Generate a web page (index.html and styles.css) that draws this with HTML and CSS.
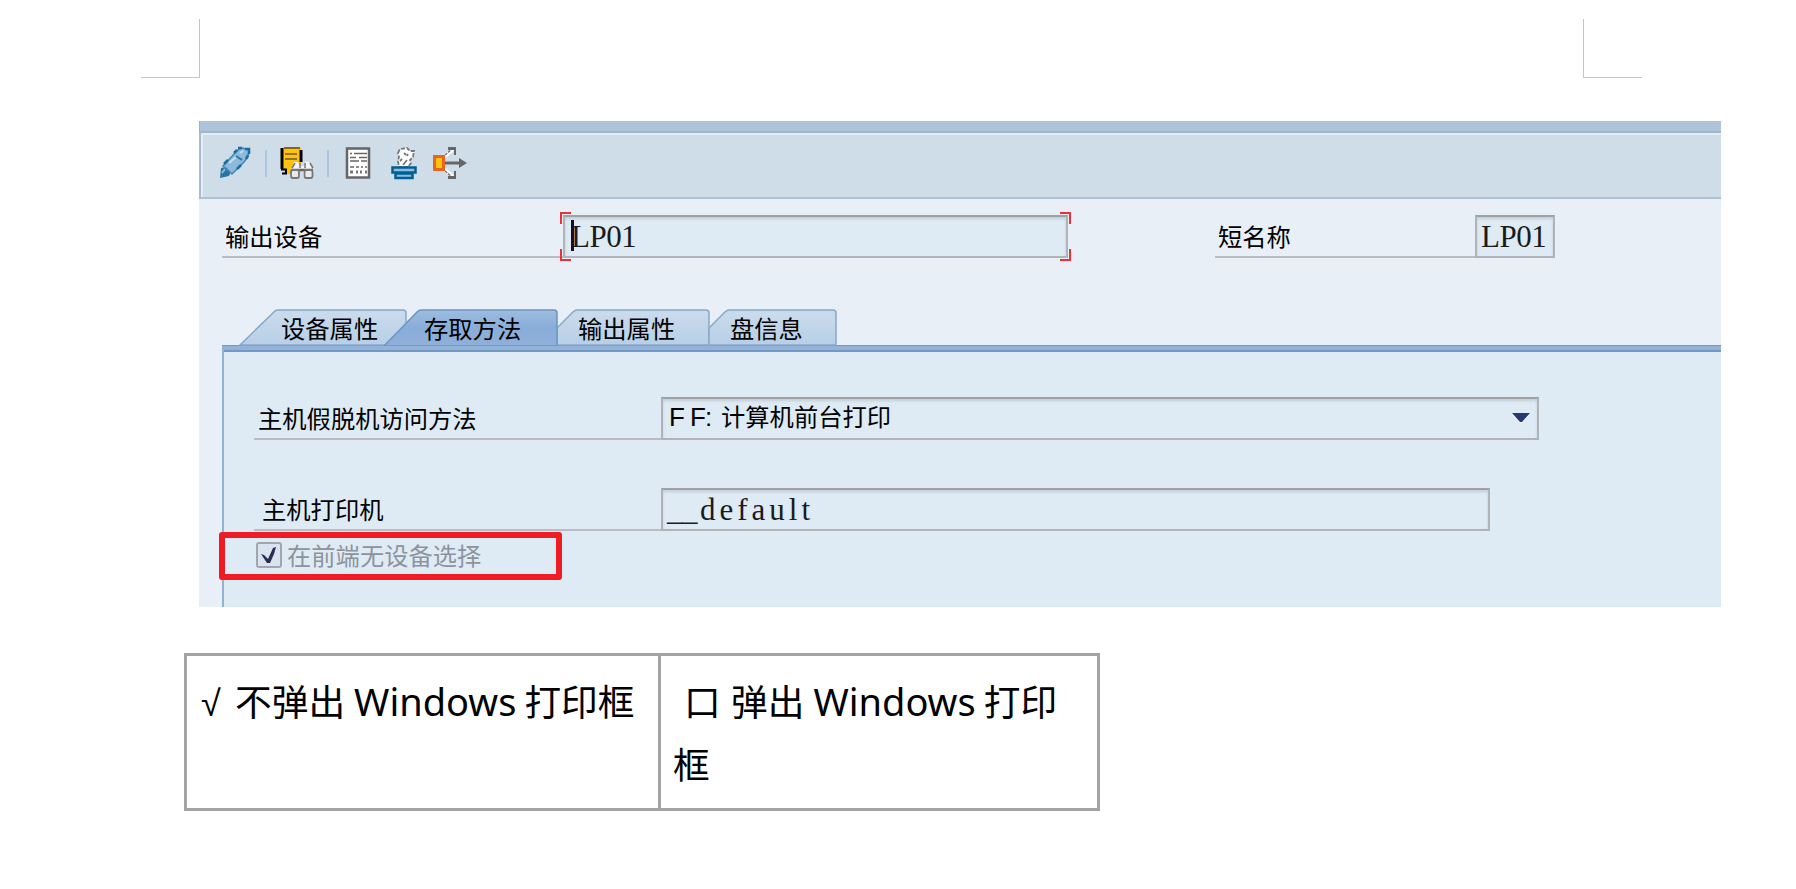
FILE: index.html
```
<!DOCTYPE html>
<html lang="zh-CN">
<head>
    <meta charset="utf-8">
    <title>输出设备</title>
    <link rel="stylesheet" href="styles.css">
</head>
<body>
    <div class="crop-marks">
        <div class="mark mark-left"></div>
        <div class="mark mark-right"></div>
    </div>

    <div class="window">
        <div class="title-strip"></div>
        <div class="toolbar">
            <svg class="icon" width="34" height="36" viewBox="0 0 34 36">
                <path d="M3 33l1-10 4-1 6 5-2 4z" fill="#2876a5"/>
                <path d="M6 21L17 9l5-5 4-1 6 2-1 7-4 5-12 12-5-5z" fill="#8db9dc" stroke="#4088b4" stroke-width="1.500"/>
                <path d="M21 3h4M28 4h4v5M7 19l4-4M17 8l3-3M20 24l4-4M29 14l2-4" fill="none" stroke="#1c6c9c" stroke-width="2.500"/>
                <path d="M19 11l6 4" stroke="#2876a5" stroke-width="2"/>
                <path d="M12 18l7-6M23 8l3-2" stroke="#c6e0f2" stroke-width="2"/>
                <path d="M5 28l3-4" stroke="#8db9dc" stroke-width="2"/>
            </svg>
            <span class="sep sep-first"></span>
            <svg class="icon icon-note" width="36" height="36" viewBox="0 0 36 36">
                <path d="M2 3h19v15l-9 6-2 5H5l2-5H2z" fill="#ffc20e"/>
                <path d="M2 3v21M21 5v12" fill="none" stroke="#000" stroke-width="3"/>
                <path d="M1 24.500h5v4H2" fill="none" stroke="#000" stroke-width="2"/>
                <path d="M4 3h16" stroke="#8a6410" stroke-width="2"/>
                <path d="M5 9h12M5 14h12" stroke="#93722c" stroke-width="2"/>
                <path d="M11 24l3-7h4l2 4h4l1-4h4l3 7v8h-9v-6h-3v6h-9z" fill="#f4f6f8"/>
                <path d="M12 23l3-5M20 18v5M25 18v5M30 18l3 5" stroke="#777" stroke-width="1.500"/>
                <path d="M11 25h22" stroke="#666" stroke-width="2.500"/>
                <rect x="11" y="25" width="8" height="8" rx="2" fill="#e8ebee" stroke="#777" stroke-width="1.800"/>
                <rect x="24.500" y="25" width="8" height="8" rx="2" fill="#e8ebee" stroke="#777" stroke-width="1.800"/>
            </svg>
            <span class="sep sep-second"></span>
            <svg class="icon icon-doc" width="26" height="36" viewBox="0 0 26 36">
                <rect x="2" y="3.500" width="22" height="29" fill="#fff" stroke="#666" stroke-width="2.500"/>
                <path d="M5 8.500h2M9 8.500h13M5 12.500h6M14 12.500h8M5 16h9M16 16h6M5 22h4M11 22h3M16 22h2M20 22h2" stroke="#666" stroke-width="1.600"/>
                <path d="M5 27h3M11 27h2M15 27h2M20 27h2" stroke="#777" stroke-width="3"/>
            </svg>
            <svg class="icon icon-tray" width="26" height="36" viewBox="0 0 26 36">
                <path d="M7 8l2-4 7-1 3 3h4l-1 6-3 3 1 3-3 4H8l-1-6 1-4z" fill="#fff" stroke="#777" stroke-width="1.800" stroke-dasharray="4 1.500"/>
                <path d="M13 8l2 2M17 9l-1 2M11 14l-2 2M12 20l4-5" stroke="#777" stroke-width="1.800"/>
                <path d="M1.500 22.500h23v5h-23z" fill="#8fbbe0" stroke="#006093" stroke-width="2.500"/>
                <path d="M4.500 28.500h17v4.500h-17z" fill="#8fbbe0" stroke="#006093" stroke-width="2.500"/>
            </svg>
            <svg class="icon icon-split" width="34" height="36" viewBox="0 0 34 36">
                <path d="M11 12l9-8M11 24l9 8" stroke="#fff" stroke-width="4"/>
                <path d="M12 10l8-7M12 26l8 7" stroke="#777" stroke-width="1.500" stroke-dasharray="3 1"/>
                <path d="M15 2h8v8h-2V5h-6zM15 34h8v-8h-2v5h-6z" fill="#666"/>
                <path d="M12 18h16" stroke="#666" stroke-width="3"/>
                <path d="M26 13l8 5-8 5z" fill="#666"/>
                <rect x="1.500" y="11.500" width="9" height="13" fill="#ffc20e" stroke="#e76423" stroke-width="3"/>
            </svg>
        </div>

        <div class="header-row">
            <div class="label label-device">输出设备</div>
            <div class="field field-device">
                <span class="mono">LP01</span>
                <i class="caret"></i>
                <i class="corner tl"></i><i class="corner tr"></i><i class="corner bl"></i><i class="corner br"></i>
            </div>
            <div class="label label-short">短名称</div>
            <div class="field field-short"><span class="mono">LP01</span></div>
        </div>

        <div class="tabs">
            <svg class="tab-shapes" width="620" height="37" viewBox="0 0 620 37">
                <defs>
                    <linearGradient id="tab" x1="0" y1="0" x2="0" y2="1">
                        <stop offset="0" stop-color="#cbdcec"/>
                        <stop offset="1" stop-color="#b8cfe7"/>
                    </linearGradient>
                    <linearGradient id="tabActive" x1="0" y1="0" x2="0" y2="1">
                        <stop offset="0" stop-color="#9dbde0"/>
                        <stop offset=".5" stop-color="#89add9"/>
                        <stop offset="1" stop-color="#8fb0da"/>
                    </linearGradient>
                </defs>
                <g fill="url(#tab)" stroke="#86a9ca" stroke-width="1.500">
                    <path d="M19 36L54 2q1-1 3-1h125q3 0 3 3v32z"/>
                    <path d="M336 36V19L352 3q2-2 4-2h129q3 0 3 3v32z"/>
                    <path d="M488 36V19L504 3q2-2 4-2h104q3 0 3 3v32z"/>
                </g>
                <path d="M163 37L196 3q2-2 4-2h133q3 0 3 3v33z" fill="url(#tabActive)" stroke="#6b95c0" stroke-width="1.500"/>
            </svg>
            <div class="tab tab-attrs">设备属性</div>
            <div class="tab tab-access">存取方法</div>
            <div class="tab tab-output">输出属性</div>
            <div class="tab tab-tray">盘信息</div>
        </div>

        <div class="panel">
            <div class="row">
                <div class="label label-method">主机假脱机访问方法</div>
                <div class="field field-method">
                    <span class="latin">F F:</span><span class="cjk">计算机前台打印</span>
                    <svg class="arrow" width="20" height="12" viewBox="0 0 20 12"><path d="M1 1h18v2l-8 8H9L1 3z" fill="#f3f8fc"/><path d="M1 1h18l-8 9H9z" fill="#233b70"/></svg>
                </div>
            </div>
            <div class="row row-printer">
                <div class="label label-printer">主机打印机</div>
                <div class="field field-printer"><span class="mono">__</span><span class="mono mono-wide">default</span></div>
            </div>
            <div class="check-row">
                <span class="checkbox">
                    <svg width="20" height="22" viewBox="0 0 20 22"><path d="M2 10l3 1 4 4 5-11 3-1-2 7-4 9H8z" fill="#2b2d50"/></svg>
                </span>
                <span class="check-label">在前端无设备选择</span>
            </div>
        </div>
    </div>

    <table class="notes">
        <tr>
            <td class="note-yes"><span class="tick">√</span>不弹出<span class="win">Windows</span>打印框</td>
            <td class="note-no"><span class="box">口</span>弹出<span class="win">Windows</span>打印<br>框</td>
        </tr>
    </table>
</body>
</html>
```
FILE: styles.css
```
* {
    box-sizing: border-box;
}
body {
    margin: 0;
    padding-top: 19px;
    height: 889px;
    overflow: hidden;
    background-color: #fff;
    color: #000;
    font-family: "Noto Sans CJK SC", sans-serif;
}
svg {
    display: block;
}

.crop-marks {
    display: flex;
    justify-content: space-between;
    width: 1501px;
    height: 102px;
    margin-left: 141px;
}
.mark {
    width: 59px;
    height: 59px;
    border-bottom: 1px solid #c6c6c6;
}
.mark-left {
    border-right: 1px solid #c6c6c6;
}
.mark-right {
    border-left: 1px solid #c6c6c6;
}

.window {
    width: 1522px;
    height: 486px;
    margin-left: 199px;
    background-color: #e8eff6;
}
.title-strip {
    height: 12px;
    background-color: #adc4db;
    border-left: 1px solid #9bb0c8;
    border-bottom: 2px solid #a3b6c8;
}
.toolbar {
    display: flex;
    height: 66px;
    padding: 12px 0 0 16px;
    background-color: #cfdde8;
    border-left: 2px solid #a9bdd0;
    border-bottom: 2px solid #aec2d6;
    box-shadow: inset 2px 2px 0 #e4edf4;
}
.sep {
    width: 2px;
    height: 27px;
    margin-top: 5px;
    background-color: #a9c7e2;
}
.sep-first {
    margin-left: 14px;
}
.sep-second {
    margin-left: 11px;
}
.icon-note {
    margin-left: 13px;
}
.icon-doc {
    margin-left: 16px;
}
.icon-tray {
    margin-left: 20px;
}
.icon-split {
    margin-left: 16px;
}

.header-row {
    display: flex;
    padding: 16px 0 0 23px;
    height: 111px;
}
.label {
    height: 43px;
    padding-top: 8px;
    border-bottom: 2px solid #b9bcc0;
    font-size: 24.300px;
    line-height: 26px;
    white-space: nowrap;
}
.label-device {
    width: 341px;
    padding-left: 3px;
}
.label-short {
    width: 260px;
    margin-left: 147px;
    padding-left: 3px;
}
.field {
    position: relative;
    display: flex;
    height: 43px;
    padding: 0 6px;
    background-color: #deebf5;
    border: 2px solid #b0b4b8;
    border-top-color: #9da2a6;
    box-shadow: inset 0 2px 3px #c3cdd4;
    line-height: 37px;
    white-space: nowrap;
}
.field-device {
    width: 505px;
}
.field-short {
    width: 80px;
    padding-left: 4px;
}
.mono {
    font-family: "Liberation Serif", serif;
    font-size: 31px;
    line-height: 39px;
    letter-spacing: -.5px;
    color: #1b1b1b;
}
.mono-wide {
    padding-left: 3px;
    letter-spacing: 4px;
}
.caret {
    position: absolute;
    left: 6px;
    top: 3px;
    width: 3px;
    height: 31px;
    background-color: #181020;
}
.corner {
    position: absolute;
    width: 11px;
    height: 12px;
    border: 0 solid #ec3038;
}
.tl {
    left: -5px;
    top: -5px;
    border-width: 2px 0 0 2px;
}
.tr {
    right: -5px;
    top: -5px;
    border-width: 2px 2px 0 0;
}
.bl {
    left: -5px;
    bottom: -5px;
    border-width: 0 0 2px 2px;
}
.br {
    right: -5px;
    bottom: -5px;
    border-width: 0 2px 2px 0;
}

.tabs {
    position: relative;
    display: flex;
    height: 36px;
    margin-left: 23px;
    font-size: 24.300px;
    line-height: 36px;
}
.tab-shapes {
    position: absolute;
    left: -1px;
    top: -1px;
}
.tab {
    position: relative;
    white-space: nowrap;
}
.tab-attrs {
    width: 143px;
    margin-left: 59px;
}
.tab-access {
    width: 154px;
}
.tab-output {
    width: 152px;
}

.panel {
    height: 261px;
    margin-left: 23px;
    padding: 47px 0 0 30px;
    background-color: #deebf5;
    border-left: 2px solid #92b2d3;
    border-top: 4px solid #93b2d9;
    box-shadow: 0 -1px 0 #7199c4, inset 0 2px 0 #7199c4;
}
.row {
    display: flex;
}
.row-printer {
    margin-top: 48px;
}
.label-method {
    width: 407px;
    padding-left: 4px;
}
.label-printer {
    width: 407px;
    padding-left: 8px;
}
.field-method {
    width: 878px;
}
.latin {
    width: 52px;
    font-family: "Liberation Sans", sans-serif;
    font-size: 26px;
    line-height: 36px;
    letter-spacing: -1px;
}
.cjk {
    font-size: 24.300px;
    line-height: 34px;
}
.arrow {
    margin: 13px 0 0 auto;
}
.field-printer {
    width: 829px;
    padding-left: 4px;
}
.check-row {
    display: flex;
    align-items: center;
    width: 343px;
    height: 48px;
    margin: 1px 0 0 -35px;
    padding-left: 31px;
    border: 6px solid #ee1c25;
    border-radius: 3px;
    position: relative;
}
.checkbox {
    display: flex;
    align-items: center;
    justify-content: center;
    width: 26px;
    height: 26px;
    margin-top: -2px;
    border: 2px solid #a2a6aa;
    border-radius: 3px;
    background-color: #d8e3ef;
}
.check-label {
    margin: -3px 0 0 5px;
    font-size: 24.300px;
    line-height: 30px;
    color: #8d939d;
}

.notes {
    width: 916px;
    height: 158px;
    margin: 46px 0 0 184px;
    border-collapse: collapse;
    table-layout: fixed;
}
.notes td {
    border: 3px solid #a3a3a3;
    padding: 13px 0 0 12px;
    vertical-align: top;
    font-size: 36.700px;
    line-height: 63px;
    white-space: nowrap;
}
.note-yes {
    width: 474px;
}
.win {
    margin: 0 8px 0 9px;
    font-family: "Noto Sans", sans-serif;
    font-size: 38px;
    line-height: 1;
}
.tick {
    display: inline-block;
    width: 36px;
    padding-left: 2px;
    font-family: "Liberation Sans", sans-serif;
    font-size: 36px;
    line-height: 1;
}
.box {
    display: inline-block;
    width: 47px;
    margin-left: 11px;
    line-height: 1;
}
```
